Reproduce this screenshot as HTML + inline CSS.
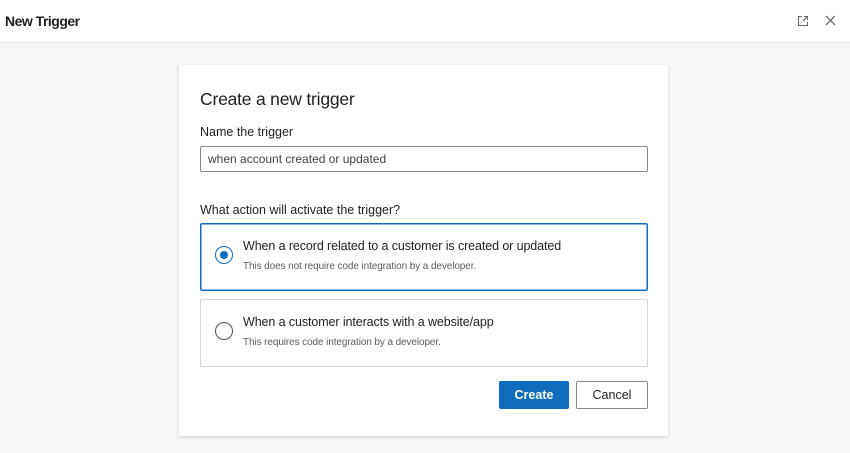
<!DOCTYPE html>
<html><head><style>
*{box-sizing:border-box;margin:0;padding:0}
body{width:850px;height:453px;background:#f6f6f6;font-family:"Liberation Sans",sans-serif;color:#201f1e;position:relative;overflow:hidden}
.hdr{position:absolute;left:0;top:0;width:850px;height:43px;background:#fff;border-bottom:1px solid #e8e8e8}
.hdr h1{position:absolute;left:5px;top:13px;font-size:14px;font-weight:bold;letter-spacing:-0.5px}
.card{position:absolute;left:179px;top:65px;width:489px;height:371px;background:#fff;box-shadow:0 1px 3px rgba(0,0,0,.15)}
.a{position:absolute;white-space:nowrap}
.box{position:absolute;left:21px;width:448px;height:68px;border:1px solid #d6d6d6;border-radius:2px}
.box.sel{border:1px solid #0f6cbd;box-shadow:inset 0 0 0 0.5px #0f6cbd}
.r{position:absolute;left:14px;top:22px;width:18px;height:18px;border-radius:50%;border:1px solid #555}
.sel .r{border-color:#0f6cbd}
.sel .r:after{content:"";position:absolute;left:4px;top:4px;width:8px;height:8px;border-radius:50%;background:#0f6cbd}
.t1{position:absolute;left:42px;top:15px;font-size:12.5px;letter-spacing:-0.1px}
.t2{position:absolute;left:42px;top:37px;font-size:10px;color:#605e5c;letter-spacing:-0.1px}
.btn{position:absolute;top:316px;height:28px;font-size:13px;text-align:center;line-height:26px;border-radius:2px}
</style></head><body>
<div class="hdr"><h1>New Trigger</h1>
<svg style="position:absolute;left:797px;top:15px" width="12" height="12" viewBox="0 0 12 12" fill="none" stroke="#666" stroke-width="1"><path d="M5 1.5H1.5v9h9V7M7 1.5h3.5V5M10.5 1.5L6 6"/></svg>
<svg style="position:absolute;left:825px;top:15px" width="11" height="11" viewBox="0 0 11 11" stroke="#555" stroke-width="1.1"><path d="M1 1l9 9M10 1l-9 9"/></svg>
</div>
<div class="card">
<div class="a" style="left:21px;top:24px;font-size:17.5px;letter-spacing:-0.2px">Create a new trigger</div>
<div class="a" style="left:21px;top:60px;font-size:12.5px">Name the trigger</div>
<div class="a" style="left:21px;top:81px;width:448px;height:26px;border:1px solid #8a8886;border-radius:2px;font-size:12px;color:#444;padding:5px 7px">when account created or updated</div>
<div class="a" style="left:21px;top:138px;font-size:12.5px">What action will activate the trigger?</div>
<div class="box sel" style="top:158px"><div class="r"></div><div class="t1">When a record related to a customer is created or updated</div><div class="t2">This does not require code integration by a developer.</div></div>
<div class="box" style="top:234px"><div class="r"></div><div class="t1">When a customer interacts with a website/app</div><div class="t2">This requires code integration by a developer.</div></div>
<div class="btn" style="left:320px;width:70px;background:#0f6cbd;color:#fff;font-weight:bold;border:1px solid #0f6cbd;font-size:12.5px">Create</div>
<div class="btn" style="left:397px;width:72px;background:#fff;border:1px solid #8a8886;font-size:12.5px">Cancel</div>
</div>
</body></html>
